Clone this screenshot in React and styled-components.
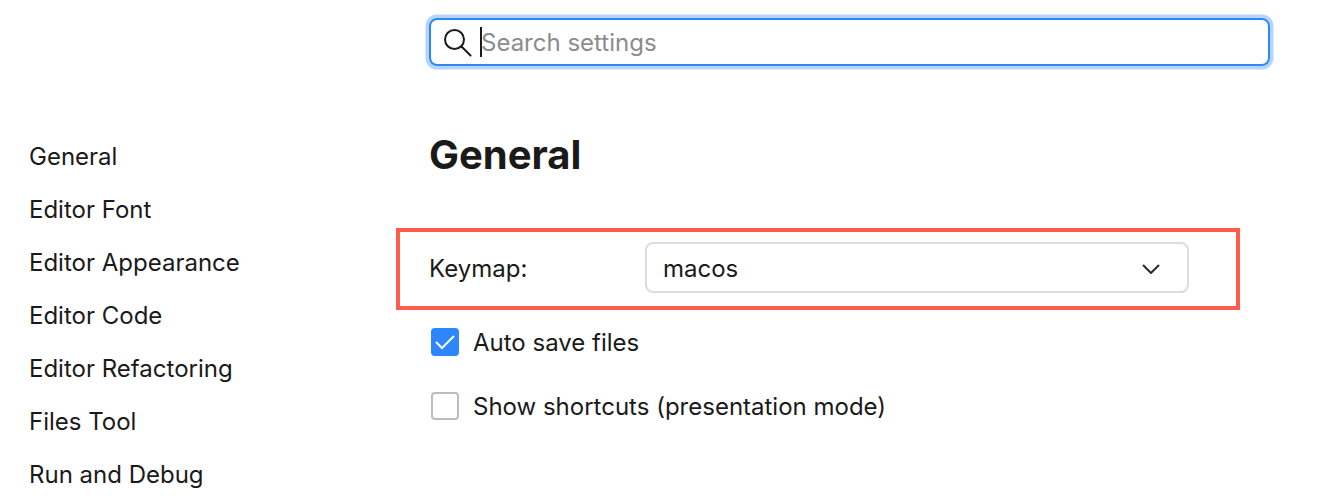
import styled, { createGlobalStyle } from "styled-components";

const GlobalStyle = createGlobalStyle`
    html, body {
        margin: 0;
        height: 500px;
        overflow: hidden;
        background: #FFFFFF;
    }
    * {
        box-sizing: border-box;
    }
`;

const MENU = [
    "General",
    "Editor Font",
    "Editor Appearance",
    "Editor Code",
    "Editor Refactoring",
    "Files Tool",
    "Run and Debug",
];

export default function App() {
    return (
        <Page>
            <GlobalStyle />
            <Sidebar>
                {MENU.map((item) => (
                    <MenuItem key={item}>{item}</MenuItem>
                ))}
            </Sidebar>
            <Main>
                <SearchBox>
                    <svg width="30" height="30" viewBox="0 0 30 30" fill="none" stroke="#1A1A1A" strokeWidth="2">
                        <circle cx="12.5" cy="12.5" r="9.5" />
                        <path d="M19.5 19.5 L28.5 28.5" strokeLinecap="round" />
                    </svg>
                    <Caret />
                    <SearchText>Search settings</SearchText>
                </SearchBox>
                <Title>General</Title>
                <KeymapRow>
                    <Label>Keymap:</Label>
                    <Select>
                        <span>macos</span>
                        <svg width="18" height="10" viewBox="0 0 18 10" fill="none" stroke="#2A2A2A" strokeWidth="2">
                            <path d="M1 1 L9 9 L17 1" />
                        </svg>
                    </Select>
                </KeymapRow>
                <CheckRow>
                    <CheckBox checked>
                        <svg width="20" height="16" viewBox="0 0 20 16" fill="none" stroke="#FFFFFF" strokeWidth="2">
                            <path d="M1 8 L7 14 L19 2" />
                        </svg>
                    </CheckBox>
                    <Label>Auto save files</Label>
                </CheckRow>
                <CheckRow>
                    <CheckBox />
                    <Label>Show shortcuts (presentation mode)</Label>
                </CheckRow>
            </Main>
        </Page>
    );
}

const Page = styled.div`
    display: flex;
    width: 1326px;
    height: 500px;
    overflow: hidden;
    font-family: Inter, "Liberation Sans", sans-serif;
    color: #1A1A1A;
`;

const Sidebar = styled.nav`
    width: 429px;
    flex-shrink: 0;
    padding: 130px 0 0 29px;
    display: flex;
    flex-direction: column;
`;

const MenuItem = styled.div`
    height: 53px;
    line-height: 53px;
    font-size: 24px;
    white-space: nowrap;
`;

const Main = styled.main`
    width: 841px;
    padding-top: 18px;
    display: flex;
    flex-direction: column;
`;

const SearchBox = styled.div`
    height: 48px;
    display: flex;
    align-items: center;
    padding-left: 11px;
    border: 2px solid #2E86FF;
    border-radius: 8px;
    box-shadow: 0 0 0 3.5px #B5D5FE;
`;

const Caret = styled.div`
    width: 2px;
    height: 30px;
    margin-left: 8px;
    background: #1A1A1A;
`;

const SearchText = styled.span`
    font-size: 24px;
    line-height: 30px;
    margin-top: 1px;
    margin-left: -1px;
    color: #8C8C8C;
`;

const Title = styled.h1`
    margin: 64px 0 0;
    height: 98px;
    font-size: 40px;
    line-height: 50px;
    font-weight: 700;
    color: #1A1A1A;
`;

const KeymapRow = styled.div`
    width: 844px;
    height: 82px;
    flex-shrink: 0;
    margin: 0 0 18px -33px;
    padding-left: 29px;
    display: flex;
    align-items: center;
    border: 4px solid #FF5C50;
`;

const Label = styled.label`
    font-size: 24px;
    white-space: nowrap;
    flex-shrink: 0;

    ${KeymapRow} & {
        width: 216px;
        margin-bottom: 2px;
    }
`;

const Select = styled.div`
    width: 544px;
    height: 51px;
    margin-bottom: 3px;
    padding: 2px 27px 0 16px;
    display: flex;
    align-items: center;
    justify-content: space-between;
    border: 2px solid #DDDDDD;
    border-radius: 8px;
    font-size: 24px;
`;

const CheckRow = styled.div`
    height: 28px;
    margin-bottom: 36px;
    padding-left: 2px;
    display: flex;
    align-items: center;
    gap: 14px;
`;

const CheckBox = styled.div`
    width: 28px;
    height: 28px;
    display: flex;
    align-items: center;
    justify-content: center;
    border-radius: 4px;
    background: ${(props) => (props.checked ? "#2E86FF" : "#FFFFFF")};
    border: ${(props) => (props.checked ? "none" : "2px solid #BDBDBD")};
`;
